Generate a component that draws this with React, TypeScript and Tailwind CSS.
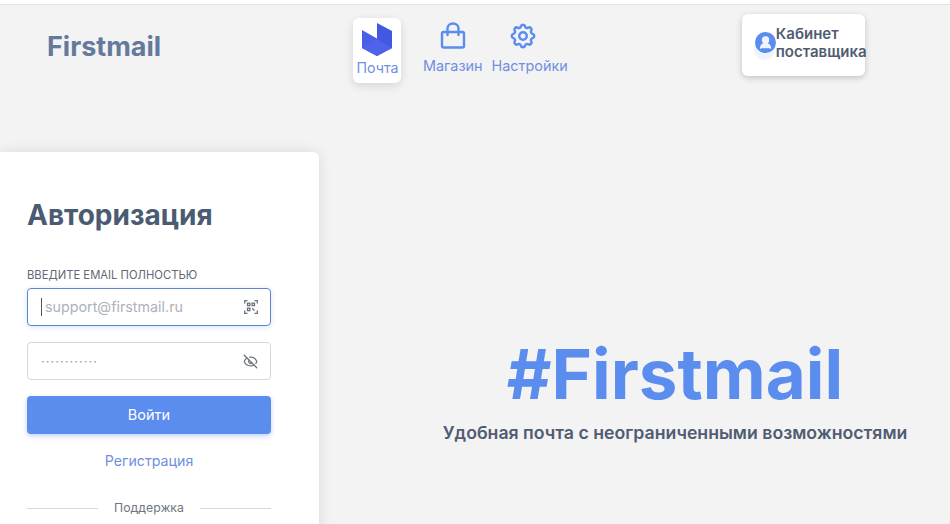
import { EyeOff, UserRound } from 'lucide-react'
import { TbSettings } from 'react-icons/tb'

const sans = { fontFamily: 'Inter, "Noto Sans", sans-serif' }

function MailLogo() {
  return (
    <svg width="30" height="33" viewBox="0 0 30 33">
      <path d="M0 7 L15 15.5 L15 33 L0 25 Z" fill="#4a5fe8" />
      <path d="M15 0 L30 8 L30 25 L15 33 Z" fill="#4358e0" />
      <path d="M0 25 L15 16.5 L30 25 L15 33 Z" fill="#4f63ea" />
    </svg>
  )
}

function BagIcon() {
  return (
    <svg width="26" height="27" viewBox="0 0 26 27" fill="none" stroke="#5b8def" strokeWidth="2.4">
      <rect x="2" y="10" width="22" height="15.5" rx="1.5" />
      <path d="M7.5 13 V6.5 a5.5 5 0 0 1 11 0 V13" strokeLinecap="round" />
    </svg>
  )
}

function ScanIcon() {
  return (
    <svg width="14" height="14" viewBox="0 0 14 14" fill="none" stroke="#6b7280" strokeWidth="1.3">
      <path d="M0.7 3.5 V0.7 H3.5 M10.5 0.7 H13.3 V3.5 M13.3 10.5 V13.3 H10.5 M3.5 13.3 H0.7 V10.5" />
      <rect x="3.5" y="3.2" width="2.4" height="2.4" />
      <rect x="8.1" y="3.2" width="2.4" height="2.4" />
      <rect x="3.5" y="8.2" width="2.4" height="2.4" />
      <path d="M8.2 8.2 L10.6 10.6" />
    </svg>
  )
}

function NavLink({ icon, label, iconClass }: { icon: React.ReactNode; label: string; iconClass?: string }) {
  return (
    <div className="flex flex-col items-center">
      <div className={`flex h-[27px] items-center ${iconClass ?? ''}`}>{icon}</div>
      <span className="mt-[7px] text-[14.4px] leading-5 text-[#6f8fe0]">{label}</span>
    </div>
  )
}

export default function App() {
  return (
    <div className="h-[524px] w-[950px] overflow-hidden bg-[#f3f3f3]" style={sans}>
      <div className="h-[5px] border-b border-[#e2e2e2] bg-white" />

      {/* Header */}
      <header className="flex h-[147px] items-start">
        <div className="mt-[24px] ml-[47px] w-[306px] text-[27px] leading-9 font-bold text-[#64799b]">Firstmail</div>
        <div className="mt-[13px] flex h-[65px] w-[48px] flex-col items-center rounded-md bg-white pt-[5px] shadow-[0_3px_10px_rgba(0,0,0,0.12)]">
          <MailLogo />
          <span className="mt-[2px] pl-[1px] text-[14.2px] leading-5 text-[#6f8fe0]">Почта</span>
        </div>
        <div className="mt-[17px] ml-[22px] flex gap-[9px]">
          <NavLink icon={<BagIcon />} label="Магазин" />
          <NavLink icon={<TbSettings size={30} strokeWidth={2} color="#5b8def" />} label="Настройки" iconClass="mr-[14px]" />
        </div>
        <div className="mt-[9px] ml-[174px] flex h-[62px] w-[123px] items-center rounded-md bg-white pl-[13px] shadow-[0_2px_6px_rgba(0,0,0,0.2)]">
          <div className="relative -mt-[6px] flex h-[21px] w-[21px] shrink-0 items-center justify-center rounded-full bg-[#5b8def]">
            <UserRound size={15} color="#ffffff" fill="#ffffff" />
            <div className="absolute top-[5px] left-[-1px] h-[23px] w-[21px] rounded-full bg-[#5b8def]/10" />
          </div>
          <div className="-mt-[5px] text-[15px] leading-[18px] font-semibold whitespace-nowrap text-[#505c72]">
            Кабинет
            <br />
            поставщика
          </div>
        </div>
      </header>

      <main className="flex">
        {/* Login card */}
        <section className="h-[400px] w-[319px] shrink-0 rounded-tr-md bg-white pt-[45px] pr-[48px] pl-[27px] shadow-[0_0_14px_rgba(0,0,0,0.1)]">
          <h1 className="text-[28px] leading-9 font-bold text-[#4a5b72]">Авторизация</h1>
          <div className="mt-[34px] text-[11.25px] leading-4 text-[#5f6875]">ВВЕДИТЕ EMAIL ПОЛНОСТЬЮ</div>
          <div className="mt-[5px] flex h-[38px] items-center rounded-[4px] border border-[#5b86cf] pr-[12px] pl-[13px] shadow-[0_1px_5px_rgba(91,141,239,0.25)]">
            <span className="h-[18px] w-px bg-[#555]" />
            <span className="ml-[3px] flex-1 text-[14.3px] text-[#adb2ba]">support@firstmail.ru</span>
            <ScanIcon />
          </div>
          <div className="mt-[16px] flex h-[38px] items-center rounded-[4px] border border-[#d8d8d8] pr-[12px] pl-[13px]">
            <span className="flex-1 text-[13px] leading-none tracking-[1px] text-[#9a9fa8]">············</span>
            <EyeOff size={15} color="#6b7280" />
          </div>
          <button className="mt-[16px] h-[38px] w-full rounded-[4px] bg-[#5b8def] text-[14.5px] text-white shadow-[0_2px_5px_rgba(91,141,239,0.4)]">
            Войти
          </button>
          <div className="mt-[17px] text-center text-[14.2px] leading-5 text-[#6f8fe0]">Регистрация</div>
          <div className="mt-[28px] flex items-center">
            <span className="h-px flex-1 bg-[#d8d8d8]" />
            <span className="w-[102px] text-center text-[12.3px] text-[#6f7680]">Поддержка</span>
            <span className="h-px flex-1 bg-[#d8d8d8]" />
          </div>
        </section>

        {/* Hero */}
        <section className="flex flex-1 flex-col items-center pt-[179px] pl-[81px]">
          <div className="text-[69px] leading-[86px] font-bold text-[#5b8def]">#Firstmail</div>
          <div className="mt-[4px] text-[17.7px] leading-6 font-semibold whitespace-nowrap text-[#505c72]">
            Удобная почта с неограниченными возможностями
          </div>
        </section>
      </main>
    </div>
  )
}
